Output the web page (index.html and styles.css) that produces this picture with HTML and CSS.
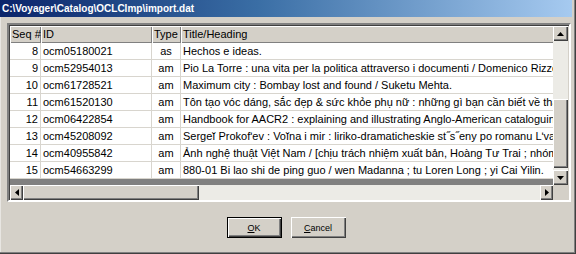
FILE: index.html
```html
<!DOCTYPE html>
<html>
<head>
<meta charset="utf-8">
<link rel="stylesheet" href="styles.css">
</head>
<body>
<div class="window">
  <div class="titlebar">C:\Voyager\Catalog\OCLCImp\import.dat</div>
  <div class="client">
    <div class="listbox">
      <div class="upper">
        <div class="viewport">
          <div class="row head">
            <div class="cell hc">Seq #</div>
            <div class="cell hc">ID</div>
            <div class="cell hc">Type</div>
            <div class="cell hc">Title/Heading</div>
          </div>
          <div class="row"><div class="cell num">8</div><div class="cell">ocm05180021</div><div class="cell ctr">as</div><div class="cell">Hechos e ideas.</div></div>
          <div class="row"><div class="cell num">9</div><div class="cell">ocm52954013</div><div class="cell ctr">am</div><div class="cell">Pio La Torre : una vita per la politica attraverso i documenti / Domenico Rizzo</div></div>
          <div class="row"><div class="cell num">10</div><div class="cell">ocm61728521</div><div class="cell ctr">am</div><div class="cell">Maximum city : Bombay lost and found / Suketu Mehta.</div></div>
          <div class="row"><div class="cell num">11</div><div class="cell">ocm61520130</div><div class="cell ctr">am</div><div class="cell">Tôn tạo vóc dáng, sắc đẹp &amp; sức khỏe phụ nữ : những gì bạn cần biết về thân thể</div></div>
          <div class="row"><div class="cell num">12</div><div class="cell">ocm06422854</div><div class="cell ctr">am</div><div class="cell">Handbook for AACR2 : explaining and illustrating Anglo-American cataloguing rules</div></div>
          <div class="row"><div class="cell num">13</div><div class="cell">ocm45208092</div><div class="cell ctr">am</div><div class="cell">Sergeĭ Prokofʹev : Voĭna i mir : liriko-dramaticheskie st˝s˝eny po romanu Lʹva Tolstogo</div></div>
          <div class="row"><div class="cell num">14</div><div class="cell">ocm40955842</div><div class="cell ctr">am</div><div class="cell">Ảnh nghệ thuật Việt Nam / [chịu trách nhiệm xuất bản, Hoàng Tư Trai ; nhóm biên soạn</div></div>
          <div class="row"><div class="cell num">15</div><div class="cell">ocm54663299</div><div class="cell ctr">am</div><div class="cell">880-01 Bi lao shi de ping guo / wen Madanna ; tu Loren Long ; yi Cai Yilin.</div></div>
        </div>
        <div class="vscroll">
          <div class="btn vbtn"><svg width="7" height="4" viewBox="0 0 7 4"><path d="M3.5 0 L7 4 L0 4 Z" fill="#000"/></svg></div>
          <div class="track vtop"></div>
          <div class="thumb vthumb"></div>
          <div class="track vbot"></div>
          <div class="btn vbtn"><svg width="7" height="4" viewBox="0 0 7 4"><path d="M0 0 L7 0 L3.5 4 Z" fill="#000"/></svg></div>
        </div>
      </div>
      <div class="lower">
        <div class="hscroll">
          <div class="btn hbtn"><svg width="4" height="7" viewBox="0 0 4 7"><path d="M4 0 L4 7 L0 3.5 Z" fill="#000"/></svg></div>
          <div class="thumb hthumb"></div>
          <div class="track hrest"></div>
          <div class="btn hbtn"><svg width="4" height="7" viewBox="0 0 4 7"><path d="M0 0 L4 3.5 L0 7 Z" fill="#000"/></svg></div>
        </div>
        <div class="corner"></div>
      </div>
    </div>
    <div class="buttons">
      <div class="pbtn default"><span class="lbl"><u>O</u>K</span></div>
      <div class="pbtn"><span class="lbl"><u>C</u>ancel</span></div>
    </div>
  </div>
</div>
</body>
</html>
```

FILE: styles.css
```css
* { box-sizing: border-box; }
html, body { margin: 0; padding: 0; }
body {
  width: 576px;
  height: 254px;
  overflow: hidden;
  font-family: "Liberation Sans", Arial, sans-serif;
  font-size: 11px;
  background: #d4d0c8;
}
.window {
  width: 576px;
  height: 254px;
  background: #d4d0c8;
  padding-right: 4px;
  box-shadow: inset -1px -1px 0 #404040, inset -2px -2px 0 #808080, inset 1px 0 0 #e8e6e2;
}
.titlebar {
  height: 17px;
  background: linear-gradient(to right, #0a246a 0%, #3a6ea5 45%, #a6caf0 100%);
  color: #fff;
  font-weight: bold;
  font-size: 10px;
  line-height: 17px;
  padding-left: 2px;
  white-space: nowrap;
}
.client {
  padding: 6px 0 0 7px;
}
.listbox {
  width: 564px;
  height: 179px;
  border-style: solid;
  border-width: 2px;
  border-color: #808080 #ffffff #ffffff #808080;
  box-shadow: inset 1px 1px 0 #404040, inset -1px -1px 0 #d4d0c8;
  display: flex;
  flex-direction: column;
  background: #808080;
}
.upper {
  display: flex;
  height: 160px;
}
.viewport {
  flex: 1;
  overflow: hidden;
  background: #808080;
  margin: 1px 0 0 1px;
}
.row {
  display: grid;
  grid-template-columns: 31px 111px 29px 1000px;
  height: 17px;
  background: #fff;
}
.cell {
  border-right: 1px solid #d8d5ce;
  border-bottom: 1px solid #d8d5ce;
  padding: 0 2px;
  line-height: 16px;
  white-space: nowrap;
  overflow: hidden;
  color: #000;
}
.num { text-align: right; }
.ctr { text-align: center; }
.head { background: #d4d0c8; }
.hc {
  border: none;
  box-shadow: inset 1px 1px 0 #fff, inset -1px -1px 0 #808080;
  line-height: 17px;
}
.vscroll {
  width: 15px;
  display: flex;
  flex-direction: column;
  margin-top: 1px;
  margin-right: 1px;
}
.btn {
  background: #d4d0c8;
  box-shadow: inset 1px 1px 0 #fff, inset -1px -1px 0 #404040, inset -2px -2px 0 #808080;
  display: flex;
  align-items: center;
  justify-content: center;
  flex: none;
}
.vbtn { height: 15px; }
.track { background: #ecebe6; }
.vtop { height: 58px; }
.thumb {
  background: #d4d0c8;
  box-shadow: inset 1px 1px 0 #fff, inset -1px -1px 0 #404040, inset -2px -2px 0 #808080;
}
.vthumb { height: 69px; }
.vbot { flex: 1; }
.lower {
  display: flex;
  height: 15px;
}
.hscroll {
  flex: 1;
  display: flex;
  margin-left: 1px;
}
.hbtn { width: 13px; }
.hthumb { width: 176px; }
.hrest { flex: 1; }
.corner {
  width: 16px;
  background: #d4d0c8;
}
.buttons {
  display: flex;
  justify-content: center;
  gap: 9px;
  margin-top: 15px;
  padding-right: 7px;
}
.pbtn {
  width: 55px;
  height: 21px;
  background: #d4d0c8;
  box-shadow: inset 1px 1px 0 #fff, inset -1px -1px 0 #404040, inset -2px -2px 0 #808080;
  display: flex;
  align-items: center;
  justify-content: center;
  font-size: 9px;
  color: #000;
}
.pbtn.default {
  border: 1px solid #000;
  box-shadow: inset 1px 1px 0 #fff, inset -1px -1px 0 #404040, inset -2px -2px 0 #808080;
}
.lbl u { text-decoration: underline; }
```
